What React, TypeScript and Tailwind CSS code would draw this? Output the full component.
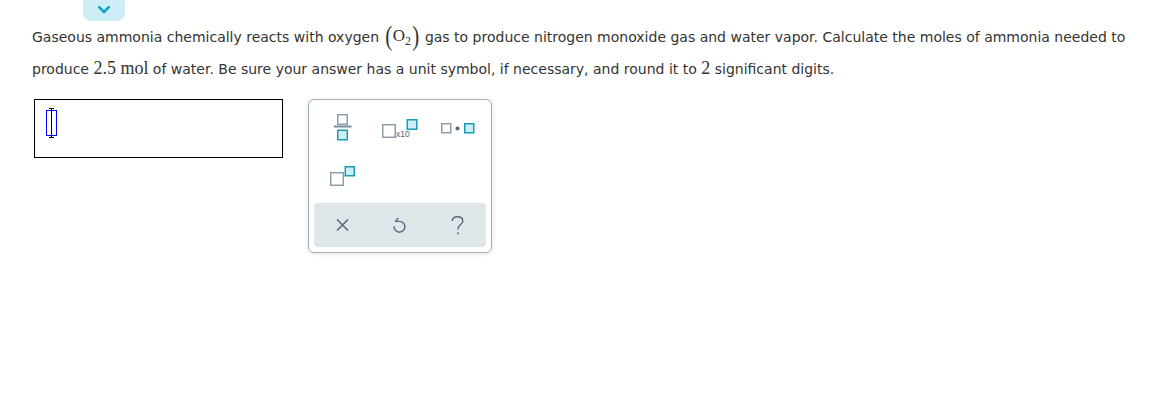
import React from "react";

const G = "#8d9fa9";
const T = "#1a9cb5";
const TF = "#cdeef3";

function Fraction() {
  return (
    <svg width="18" height="27" viewBox="0 0 18 27">
      <rect x="3.75" y="0.75" width="9.5" height="9.5" fill="#fff" stroke={G} strokeWidth="1.5" />
      <line x1="0" y1="12.5" x2="17.5" y2="12.5" stroke="#76889a" strokeWidth="2" />
      <rect x="3.75" y="16.25" width="9.5" height="9.5" fill={TF} stroke={T} strokeWidth="1.5" />
    </svg>
  );
}

function Sci() {
  return (
    <svg width="36" height="19" viewBox="0 0 36 19">
      <rect x="0.75" y="5.75" width="12.5" height="12.5" fill="#fff" stroke={G} strokeWidth="1.5" />
      <text x="14" y="17.5" fontSize="8.5" fill="#52687a" fontFamily="'Liberation Sans', Arial, sans-serif">x10</text>
      <rect x="25.25" y="0.75" width="9.5" height="9.5" fill={TF} stroke={T} strokeWidth="1.5" />
    </svg>
  );
}

function Dot() {
  return (
    <svg width="34" height="11" viewBox="0 0 34 11">
      <rect x="0.75" y="0.75" width="9" height="9" fill="#fff" stroke={G} strokeWidth="1.5" />
      <circle cx="16.5" cy="5.5" r="2" fill="#52687a" />
      <rect x="23.75" y="0.75" width="9" height="9" fill={TF} stroke={T} strokeWidth="1.5" />
    </svg>
  );
}

function Sup() {
  return (
    <svg width="25" height="20" viewBox="0 0 25 20">
      <rect x="0.75" y="6.75" width="12.5" height="12.5" fill="#fff" stroke={G} strokeWidth="1.5" />
      <rect x="15.25" y="0.75" width="9" height="9" fill={TF} stroke={T} strokeWidth="1.5" />
    </svg>
  );
}

function XIcon() {
  return (
    <svg width="13" height="12" viewBox="0 0 13 12">
      <path d="M1 0.5 L12 11.5 M12 0.5 L1 11.5" stroke="#506a7b" strokeWidth="1.5" fill="none" />
    </svg>
  );
}

function Undo() {
  return (
    <svg width="15" height="17" viewBox="0 0 15 17">
      <path d="M6 1.2 L3.6 4.4 H7.5 A5.4 5.4 0 1 1 2.1 9.8" stroke="#506a7b" strokeWidth="1.4" fill="none" strokeLinecap="round" strokeLinejoin="round" />
    </svg>
  );
}

function Question() {
  return (
    <svg width="13" height="19" viewBox="0 0 13 19">
      <path d="M1.2 5 C1.2 2.3 3.4 0.8 6.4 0.8 C9.6 0.8 11.8 2.6 11.8 5.2 C11.8 8.2 7 8.8 7 12.6 L7 13.6" stroke="#506a7b" strokeWidth="1.4" fill="none" />
      <circle cx="7" cy="17.2" r="0.95" fill="#506a7b" />
    </svg>
  );
}

function Cursor() {
  return (
    <div className="relative w-[11px] h-[30px]">
      <div className="absolute left-0 top-[2px] w-[11px] h-[26px] border border-[#0000ff]" />
      <div className="absolute left-[5px] top-0 w-px h-[30px] bg-black" />
      <div className="absolute left-[3px] top-0 w-[5px] h-px bg-black" />
      <div className="absolute left-[3px] bottom-0 w-[5px] h-px bg-black" />
    </div>
  );
}

export default function App() {
  const sans = "font-['Verdana','DejaVu_Sans',sans-serif]";
  const serif = "font-['Liberation_Serif','Times_New_Roman',serif]";
  return (
    <div className="w-full h-[411px] bg-white text-[#333333]">
      <div className="ml-[83px] w-[42px] h-[21px] bg-[#cdeef5] rounded-b-[8px] flex items-start justify-center pt-[6px]">
        <svg width="12" height="8" viewBox="0 0 12 8">
          <path d="M1.2 1.2 L6 6 L10.8 1.2" stroke="#14a3c2" strokeWidth="2.6" fill="none" strokeLinecap="round" strokeLinejoin="round" />
        </svg>
      </div>
      <div className={`pl-[32px] pt-[1px] text-[14px] leading-[30px] ${sans} whitespace-nowrap`}>
        <div>
          Gaseous ammonia chemically reacts with oxygen{" "}
          <span className={`${serif} text-[17px] inline-flex items-center align-middle relative top-[-2px]`}>
            <span className="text-[28px] font-light leading-[30px] scale-x-[0.75]">(</span>
            <span>O</span>
            <span className="text-[12px] relative top-[5px]">2</span>
            <span className="text-[28px] font-light leading-[30px] scale-x-[0.75]">)</span>
          </span>{" "}
          gas to produce nitrogen monoxide gas and water vapor. Calculate the moles of ammonia needed to
        </div>
        <div>
          produce <span className={`${serif} text-[18px]`}>2.5</span>{" "}
          <span className={`${serif} text-[18px]`}>mol</span> of water. Be sure your answer has a unit symbol, if necessary, and round it to{" "}
          <span className={`${serif} text-[18px]`}>2</span> significant digits.
        </div>
      </div>
      <div className="flex items-start mt-[15px] ml-[34px]">
        <div className="w-[249px] h-[59px] border border-black pl-[11px] pt-[8px]">
          <Cursor />
        </div>
        <div className="ml-[25px] w-[184px] h-[154px] border border-[#9fb0b9] rounded-[6px] shadow-[0_1px_5px_rgba(0,0,0,0.12)] px-[5px] flex flex-col">
          <div className="grid grid-cols-3 h-[52px] items-center justify-items-center pt-[2px]">
            <Fraction />
            <div className="pt-[2px]"><Sci /></div>
            <div className="pl-[2px] pt-[2px]"><Dot /></div>
          </div>
          <div className="grid grid-cols-3 h-[46px] items-center justify-items-center">
            <div className="pt-[2px]"><Sup /></div>
          </div>
          <div className="mt-[5px] h-[44px] bg-[#dfe6e9] rounded-[4px] grid grid-cols-3 items-center justify-items-center">
            <XIcon />
            <Undo />
            <Question />
          </div>
        </div>
      </div>
    </div>
  );
}
